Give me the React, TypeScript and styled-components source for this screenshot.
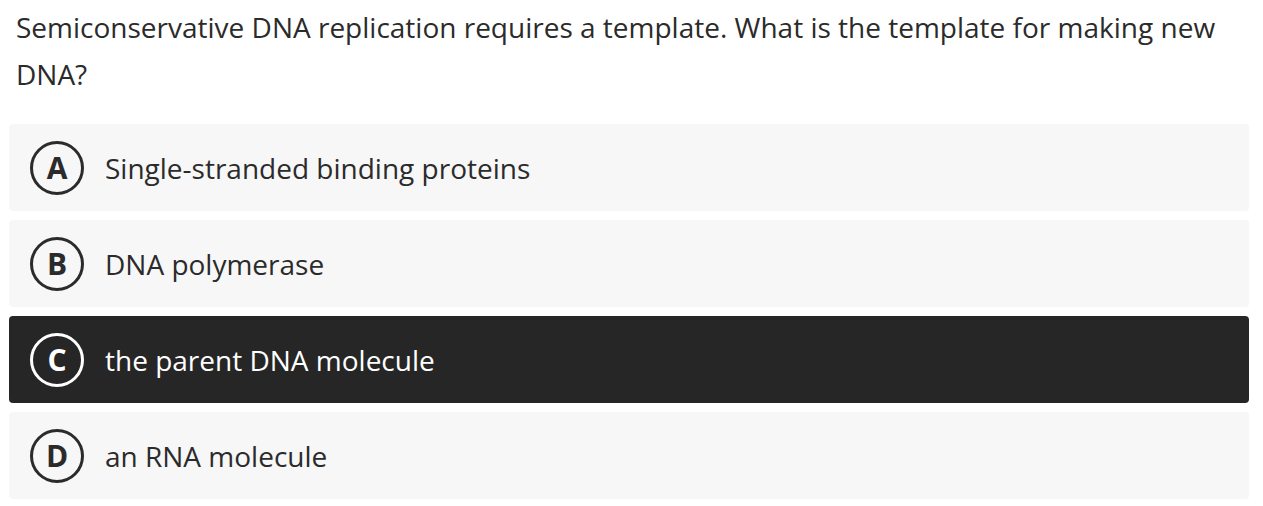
import React from 'react';
import styled, { createGlobalStyle } from 'styled-components';

const GlobalStyle = createGlobalStyle`
  body {
    margin: 0;
    background: #ffffff;
    font-family: "Open Sans", "Noto Sans", sans-serif;
    color: #2b2b2b;
  }
`;

const Page = styled.div`
  padding: 4px 14px 0 9px;
  width: 1240px;
`;

const Question = styled.p`
  margin: 0 0 26px 7px;
  font-size: 28px;
  line-height: 47px;
  color: #2b2b2b;
`;

const Options = styled.div`
  display: flex;
  flex-direction: column;
  gap: 9px;
`;

const Option = styled.div<{ $selected?: boolean }>`
  display: flex;
  align-items: center;
  gap: 21px;
  height: 87px;
  padding: 0 21px;
  border-radius: 4px;
  background: ${({ $selected }) => ($selected ? '#262626' : '#f7f7f7')};
  color: ${({ $selected }) => ($selected ? '#ffffff' : '#2b2b2b')};
`;

const Letter = styled.span<{ $selected?: boolean }>`
  flex: none;
  display: flex;
  align-items: center;
  justify-content: center;
  width: 54px;
  height: 54px;
  box-sizing: border-box;
  border-radius: 50%;
  border: 3px solid ${({ $selected }) => ($selected ? '#ffffff' : '#2b2b2b')};
  font-size: 30px;
  font-weight: 700;
`;

const Label = styled.span`
  font-size: 28px;
`;

const options = [
  { key: 'A', text: 'Single-stranded binding proteins' },
  { key: 'B', text: 'DNA polymerase' },
  { key: 'C', text: 'the parent DNA molecule', selected: true },
  { key: 'D', text: 'an RNA molecule' },
];

const App: React.FC = () => (
  <>
    <GlobalStyle />
    <Page>
      <Question>
        Semiconservative DNA replication requires a template. What is the template for making new DNA?
      </Question>
      <Options>
        {options.map((o) => (
          <Option key={o.key} $selected={o.selected}>
            <Letter $selected={o.selected}>{o.key}</Letter>
            <Label>{o.text}</Label>
          </Option>
        ))}
      </Options>
    </Page>
  </>
);

export default App;
